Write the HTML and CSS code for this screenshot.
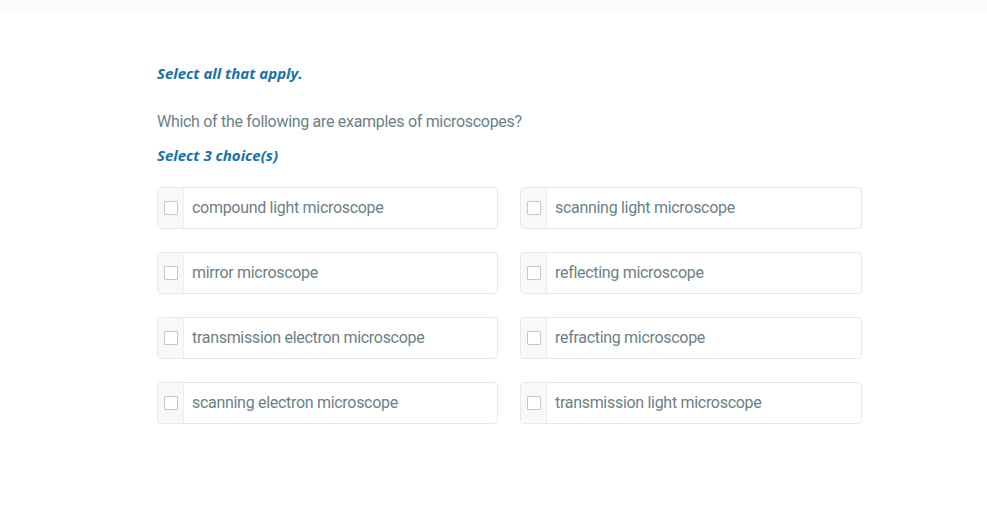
FILE: index.html
```html
<!DOCTYPE html>
<html lang="en">
<head>
  <meta charset="UTF-8" />
  <meta name="viewport" content="width=device-width, initial-scale=1" />
  <title>Question</title>
  <link rel="stylesheet" href="styles.css">
</head>
<body>
  <div class="topbar"></div>
  <div class="question">
    <p class="instruction">Select all that apply.</p>
    <p class="prompt">Which of the following are examples of microscopes?</p>
    <p class="instruction count">Select 3 choice(s)</p>

    <div class="choices">
      <label class="choice"><span class="box"><input type="checkbox" /></span><span class="text">compound light microscope</span></label>
      <label class="choice"><span class="box"><input type="checkbox" /></span><span class="text">scanning light microscope</span></label>
      <label class="choice"><span class="box"><input type="checkbox" /></span><span class="text">mirror microscope</span></label>
      <label class="choice"><span class="box"><input type="checkbox" /></span><span class="text">reflecting microscope</span></label>
      <label class="choice"><span class="box"><input type="checkbox" /></span><span class="text">transmission electron microscope</span></label>
      <label class="choice"><span class="box"><input type="checkbox" /></span><span class="text">refracting microscope</span></label>
      <label class="choice"><span class="box"><input type="checkbox" /></span><span class="text">scanning electron microscope</span></label>
      <label class="choice"><span class="box"><input type="checkbox" /></span><span class="text">transmission light microscope</span></label>
    </div>
  </div>
</body>
</html>
```

FILE: styles.css
```css
body {
  margin: 0;
  font-family: Roboto, "Noto Sans", sans-serif;
  background: #fff;
  color: #6c7f87;
}
.topbar {
  height: 13px;
  background: #fafdfc;
}
.question {
  width: 705px;
  margin: 0 0 0 157px;
  padding-top: 50px;
}
.question p {
  margin: 0;
}
.instruction {
  font-family: "Open Sans", sans-serif;
  font-weight: 700;
  font-style: italic;
  font-size: 15px;
  color: #1872a9;
  line-height: 20px;
}
.prompt {
  margin-top: 29px !important;
  font-size: 16px;
  letter-spacing: -0.3px;
  line-height: 20px;
}
.count {
  margin-top: 13px !important;
}
.choices {
  margin-top: 22px;
  display: grid;
  grid-template-columns: 341px 342px;
  column-gap: 22px;
  row-gap: 23px;
}
.choice {
  display: flex;
  height: 40px;
  border: 1px solid #e6e9ea;
  border-radius: 4px;
  overflow: hidden;
  cursor: pointer;
}
.box {
  width: 25px;
  flex: none;
  background: #f8f8f8;
  border-right: 1px solid #eceeee;
  display: flex;
  align-items: center;
  justify-content: center;
}
.box input {
  appearance: none;
  width: 14px;
  height: 14px;
  margin: 0;
  border: 1px solid #c4c8c9;
  background: #fff;
  border-radius: 1px;
}
.text {
  padding: 0 0 2px 8px;
  display: flex;
  align-items: center;
  font-size: 16px;
  letter-spacing: -0.3px;
  color: #6c7f87;
}
```
